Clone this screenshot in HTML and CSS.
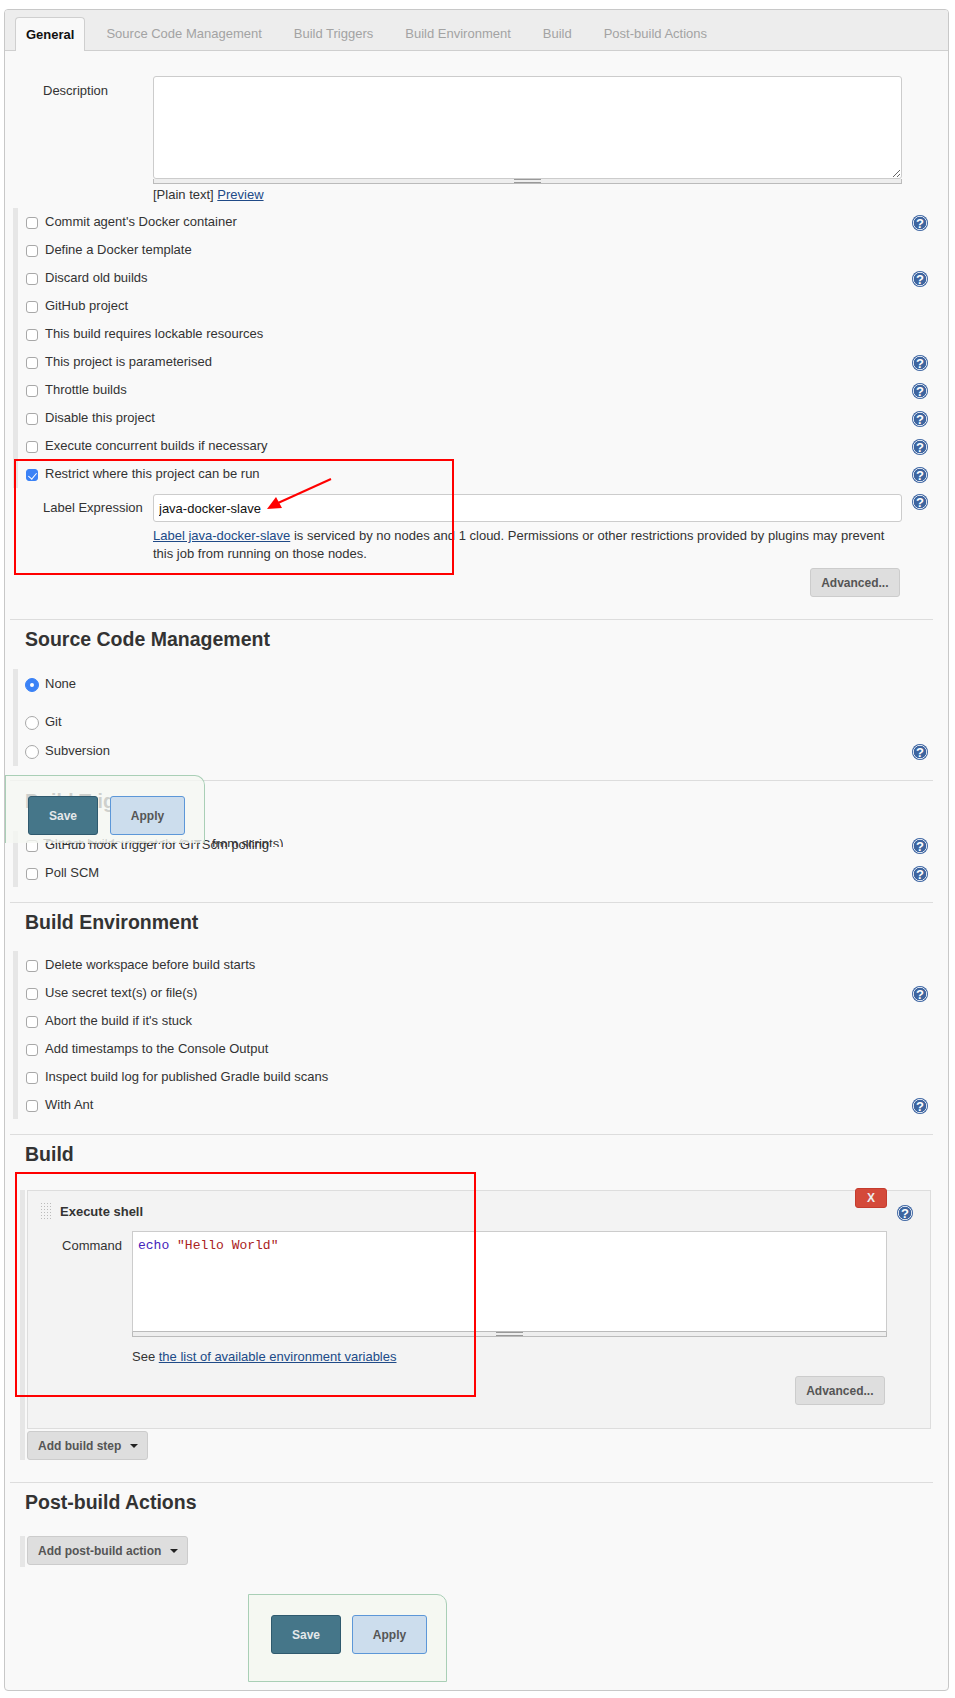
FILE: index.html
```html
<!DOCTYPE html>
<html lang="en">
<head>
<meta charset="utf-8">
<title>Job configuration</title>
<link rel="stylesheet" href="styles.css">
</head>
<body>
<svg class="defs" width="0" height="0" aria-hidden="true">
  <symbol id="help" viewBox="0 0 16 16">
    <circle cx="8" cy="8" r="8" fill="#2f5a9c"/>
    <circle cx="8" cy="8" r="6.7" fill="none" stroke="#fff" stroke-width=".9"/>
    <circle cx="8" cy="8" r="5.9" fill="#3e659f"/>
    <text x="8" y="12.6" text-anchor="middle" class="help-q">?</text>
  </symbol>
</svg>
<div class="panel">
  <nav class="tabs">
    <a class="tab active">General</a>
    <a class="tab">Source Code Management</a>
    <a class="tab">Build Triggers</a>
    <a class="tab">Build Environment</a>
    <a class="tab">Build</a>
    <a class="tab">Post-build Actions</a>
  </nav>
  <div class="content">
    <div class="field desc">
      <label class="field-label">Description</label>
      <div class="field-main">
        <textarea class="area"></textarea>
        <div class="grip"><span></span></div>
        <div class="plain">[Plain text] <a href="#">Preview</a></div>
      </div>
    </div>

    <div class="group">
      <div class="row"><input type="checkbox" class="cb"><span>Commit agent's Docker container</span><svg class="help"><use href="#help"/></svg></div>
      <div class="row"><input type="checkbox" class="cb"><span>Define a Docker template</span></div>
      <div class="row"><input type="checkbox" class="cb"><span>Discard old builds</span><svg class="help"><use href="#help"/></svg></div>
      <div class="row"><input type="checkbox" class="cb"><span>GitHub project</span></div>
      <div class="row"><input type="checkbox" class="cb"><span>This build requires lockable resources</span></div>
      <div class="row"><input type="checkbox" class="cb"><span>This project is parameterised</span><svg class="help"><use href="#help"/></svg></div>
      <div class="row"><input type="checkbox" class="cb"><span>Throttle builds</span><svg class="help"><use href="#help"/></svg></div>
      <div class="row"><input type="checkbox" class="cb"><span>Disable this project</span><svg class="help"><use href="#help"/></svg></div>
      <div class="row"><input type="checkbox" class="cb"><span>Execute concurrent builds if necessary</span><svg class="help"><use href="#help"/></svg></div>
      <div class="row"><input type="checkbox" class="cb" checked><span>Restrict where this project can be run</span><svg class="help"><use href="#help"/></svg></div>
    </div>
    <div class="field label-expr">
      <label class="field-label">Label Expression</label>
      <div class="field-main">
        <input class="text-input" type="text" value="java-docker-slave">
        <p class="note"><a href="#">Label java-docker-slave</a> is serviced by no nodes and 1 cloud. Permissions or other restrictions provided by plugins may prevent this job from running on those nodes.</p>
      </div>
      <svg class="help field-help"><use href="#help"/></svg>
    </div>
    <div class="adv-line"><button class="btn">Advanced...</button></div>

    <section class="sec scm">
      <h2>Source Code Management</h2>
      <div class="group">
        <div class="row radio-row first"><input type="radio" name="scm" class="rd" checked><span>None</span></div>
        <div class="row radio-row git"><input type="radio" name="scm" class="rd"><span>Git</span></div>
        <div class="row radio-row"><input type="radio" name="scm" class="rd"><span>Subversion</span><svg class="help"><use href="#help"/></svg></div>
      </div>
    </section>

    <section class="sec triggers">
      <h2>Build Triggers</h2>
      <div class="group">
        <div class="row hook"><input type="checkbox" class="cb"><span>GitHub hook trigger for GITScm polling</span><svg class="help"><use href="#help"/></svg>
          <div class="ghost"><span class="ghost-under">Trigger builds remotely (e.g.,</span><span class="ghost-out">from scripts)</span></div></div>
        <div class="row"><input type="checkbox" class="cb"><span>Poll SCM</span><svg class="help"><use href="#help"/></svg></div>
      </div>
    </section>

    <section class="sec env">
      <h2>Build Environment</h2>
      <div class="group">
        <div class="row"><input type="checkbox" class="cb"><span>Delete workspace before build starts</span></div>
        <div class="row"><input type="checkbox" class="cb"><span>Use secret text(s) or file(s)</span><svg class="help"><use href="#help"/></svg></div>
        <div class="row"><input type="checkbox" class="cb"><span>Abort the build if it's stuck</span></div>
        <div class="row"><input type="checkbox" class="cb"><span>Add timestamps to the Console Output</span></div>
        <div class="row"><input type="checkbox" class="cb"><span>Inspect build log for published Gradle build scans</span></div>
        <div class="row"><input type="checkbox" class="cb"><span>With Ant</span><svg class="help"><use href="#help"/></svg></div>
      </div>
    </section>

    <section class="sec build">
      <h2>Build</h2>
      <div class="group wide">
        <div class="step">
          <button class="del">X</button>
          <svg class="help step-help"><use href="#help"/></svg>
          <div class="step-head"><span class="drag"></span><b>Execute shell</b></div>
          <div class="cmd">
            <label class="cmd-label">Command</label>
            <div class="cmd-main">
              <div class="code"><span class="kw">echo</span> <span class="str">"Hello World"</span></div>
              <div class="grip"><span></span></div>
              <p class="see">See <a href="#">the list of available environment variables</a></p>
            </div>
          </div>
          <div class="step-adv"><button class="btn">Advanced...</button></div>
        </div>
        <button class="btn menu">Add build step<i class="caret"></i></button>
      </div>
    </section>

    <section class="sec post">
      <h2>Post-build Actions</h2>
      <div class="group wide">
        <button class="btn menu">Add post-build action<i class="caret"></i></button>
      </div>
    </section>

    <div class="savebar bottom">
      <button class="save">Save</button>
      <button class="apply">Apply</button>
    </div>
  </div>

  <div class="savebar floating">
    <button class="save">Save</button>
    <button class="apply">Apply</button>
  </div>
  <div class="redbox box-a"></div>
  <div class="redbox box-b"></div>
  <svg class="arrow" width="70" height="36" viewBox="0 0 70 36">
    <path d="M67 2 L14 26" stroke="#f00" stroke-width="2" fill="none"/>
    <path d="M3 32 L12 20 L18 31 Z" fill="#f00"/>
  </svg>
</div>
</body>
</html>
```
FILE: styles.css
```css
* { box-sizing: border-box; }
html, body { margin: 0; padding: 0; background: #fff; }
body {
  font-family: "Liberation Sans", Arial, sans-serif;
  font-size: 13px;
  color: #333;
  width: 955px;
  height: 1698px;
  overflow: hidden;
}
a { color: #204a87; text-decoration: underline; }
.defs { position: absolute; }
.help-q { font: bold 13px "Liberation Sans", Arial, sans-serif; fill: #fff; }

.panel {
  position: relative;
  margin: 9px 0 0 4px;
  width: 945px;
  height: 1682px;
  background: #f9f9f9;
  border: 1px solid #c8c8c8;
  border-radius: 4px;
}
.tabs {
  display: flex;
  gap: 10px;
  height: 41px;
  padding: 7px 0 0 10px;
  background: #ededed;
  border-bottom: 1px solid #cfcfcf;
  border-radius: 3px 3px 0 0;
}
.tab {
  height: 34px;
  padding: 0 11px;
  line-height: 33px;
  color: #a3a3a3;
  text-decoration: none;
}
.tab.active {
  background: #f9f9f9;
  color: #111;
  font-weight: bold;
  border: 1px solid #cfcfcf;
  border-bottom: 0;
  border-radius: 4px 4px 0 0;
  padding: 0 10px;
}
.content { padding: 25px 15px 0 5px; }

.field { display: flex; position: relative; }
.field-label { width: 143px; padding-left: 33px; flex: none; }
.field-main { width: 749px; flex: none; }
.desc .field-label { padding-top: 7px; }
.area {
  display: block;
  width: 749px;
  height: 103px;
  margin: 0;
  background: #fff;
  border: 1px solid #ccc;
  border-radius: 3px;
  resize: vertical;
}
.grip {
  height: 5px;
  background: #eee;
  border: 1px solid #bbb;
  border-top: 0;
  display: flex;
  justify-content: center;
}
.grip span { width: 27px; height: 4px; border-top: 1px solid #999; border-bottom: 1px solid #999; }
.plain { margin-top: 2px; height: 18px; line-height: 18px; }

.group { margin: 4px 0 0 3px; border-left: 5px solid #e6e6e6; padding-right: 5px; }
.row {
  position: relative;
  display: flex;
  align-items: center;
  height: 28px;
  padding-left: 8px;
  line-height: 28px;
}
.cb {
  appearance: none;
  width: 12px;
  height: 12px;
  margin: 1px 7px 0 0;
  background: #fff;
  border: 1px solid #a8a8a8;
  border-radius: 3px;
  position: relative;
  flex: none;
}
.cb:checked { background: #3b82f6; border-color: #3b82f6; }
.cb:checked::after {
  content: "";
  position: absolute;
  left: 3px;
  top: 1px;
  width: 4px;
  height: 7px;
  border: solid #fff;
  border-width: 0 1.6px 1.6px 0;
  transform: rotate(40deg);
}
.rd {
  appearance: none;
  width: 14px;
  height: 14px;
  margin: 1px 6px 0 -1px;
  background: #fff;
  border: 1px solid #a8a8a8;
  border-radius: 50%;
  flex: none;
  position: relative;
}
.rd:checked { background: #3b82f6; border-color: #3b82f6; }
.rd:checked::after {
  content: "";
  position: absolute;
  left: 4px;
  top: 4px;
  width: 4px;
  height: 4px;
  background: #fff;
  border-radius: 50%;
}
.help { width: 16px; height: 16px; margin-left: auto; margin-top: 2px; flex: none; }
.field-help { position: absolute; left: 902px; top: 0; margin: 0; }

.label-expr { margin-top: 6px; }
.label-expr .field-label { padding-top: 6px; }
.text-input {
  display: block;
  width: 749px;
  height: 28px;
  margin: 0;
  padding: 0 5px;
  font: 13px "Liberation Sans", Arial, sans-serif;
  color: #111;
  background: #fff;
  border: 1px solid #ccc;
  border-radius: 3px;
  outline: 0;
}
.note { margin: 5px 0 0; line-height: 18px; }
.adv-line { display: flex; justify-content: flex-end; padding-right: 33px; margin-top: 5px; }
.btn {
  height: 29px;
  padding: 0 10.5px;
  font: bold 12px "Liberation Sans", Arial, sans-serif;
  color: #555;
  background: #dedede;
  border: 1px solid #ccc;
  border-radius: 3px;
}

.sec { border-top: 1px solid #ddd; }
.sec h2 { margin: 0; height: 40px; line-height: 38px; padding-left: 15px; font-size: 19.5px; font-weight: bold; color: #333; }
.scm { margin-top: 22px; }
.scm .group { margin-top: 9px; padding-bottom: 1px; }
.radio-row.first { height: 30px; }
.radio-row.git { margin-top: 8px; height: 30px; }
.triggers { margin-top: 14px; }
.triggers h2 { height: 46px; line-height: 41px; }
.triggers .group { margin-top: 4px; }
.ghost {
  position: absolute;
  left: 25px;
  top: 6px;
  display: flex;
  align-items: flex-start;
  gap: 4px;
  line-height: 14px;
  white-space: nowrap;
  color: #333;
}
.ghost-under { height: 7px; overflow: hidden; }
.ghost-out { height: 10px; overflow: hidden; }
.env { margin-top: 15px; }
.env .group { margin-top: 8px; }
.build { margin-top: 15px; }
.build .group { margin-top: 15px; }
.group.wide { margin-left: 10px; padding-right: 0; }
.step {
  position: relative;
  width: 904px;
  height: 239px;
  margin-left: 2px;
  background: #f3f3f3;
  border: 1px solid #ddd;
}
.del {
  position: absolute;
  right: 43px;
  top: -3px;
  width: 32px;
  height: 20px;
  padding: 0;
  font: bold 12px "Liberation Sans", Arial, sans-serif;
  color: #eee;
  background: #d44a3a;
  border: 1px solid #c43c2e;
  border-radius: 3px;
}
.step-help { position: absolute; left: 869px; top: 14px; margin: 0; }
.step-head { display: flex; align-items: center; height: 40px; padding-left: 12px; }
.step-head b { color: #333; }
.drag {
  width: 12px;
  height: 18px;
  margin-right: 8px;
  background-image: radial-gradient(#bbb 0.8px, transparent 1px);
  background-size: 3px 3px;
}
.cmd { display: flex; }
.cmd-label { width: 104px; padding: 7px 10px 0 0; text-align: right; flex: none; }
.cmd-main { width: 755px; flex: none; }
.code {
  height: 101px;
  padding: 6px 5px;
  background: #fff;
  border: 1px solid #ccc;
  border-bottom: 1px solid #bbb;
  font: 13px "Liberation Mono", "Courier New", monospace;
}
.kw { color: #4422bb; }
.str { color: #aa2222; }
.see { margin: 11px 0 0; line-height: 18px; }
.step-adv { position: absolute; right: 45px; bottom: 23px; }
.btn.menu { display: flex; align-items: center; margin: 2px 0 0 2px; padding: 0 9px 0 10px; }
.caret {
  width: 0;
  height: 0;
  margin-left: 9px;
  border: solid transparent;
  border-width: 4px 4px 0;
  border-top-color: #222;
}
.build .btn.menu { margin-bottom: 0; }
.post { margin-top: 22px; }
.post .group { margin-top: 13px; padding-bottom: 2px; }
.post .btn.menu { margin-top: 0; }

.savebar {
  display: flex;
  gap: 11px;
  padding: 20px 0 0 22px;
  background: #f5f8f2;
  border: 1px solid #a9cfb6;
  border-radius: 0 10px 0 0;
}
.bottom { width: 199px; height: 88px; margin: 27px 0 0 238px; }
.floating {
  position: absolute;
  left: 0;
  top: 765px;
  width: 200px;
  height: 68px;
  gap: 12px;
  border-bottom: 0;
  background: rgba(245, 248, 242, .8);
}
.save, .apply {
  width: 70px;
  height: 39px;
  padding: 0;
  font: bold 12px "Liberation Sans", Arial, sans-serif;
  border-radius: 3px;
}
.save { color: #e4e8ea; background: #457689; border: 1px solid #2f5a6e; }
.apply { width: 75px; color: #555; background: #ccdded; border: 1px solid #5c97d8; }

.redbox { position: absolute; border: 2px solid #f00; pointer-events: none; }
.box-a { left: 9px; top: 449px; width: 440px; height: 116px; }
.box-b { left: 10px; top: 1162px; width: 461px; height: 225px; }
.arrow { position: absolute; left: 259px; top: 467px; }
```
